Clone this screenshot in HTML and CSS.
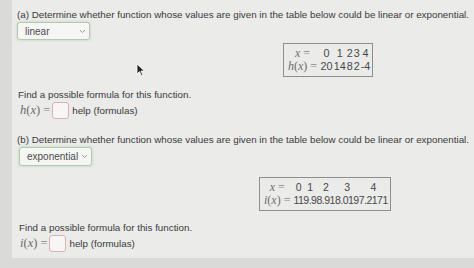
FILE: index.html
```html
<!DOCTYPE html>
<html>
<head>
<meta charset="utf-8">
<link rel="stylesheet" href="styles.css">
</head>
<body>
<div class="panel">
  <section class="part part-a">
    <p class="question">(a) Determine whether function whose values are given in the table below could be linear or exponential.</p>
    <div class="select sel-a"><span>linear</span><svg class="chev" width="7" height="5" viewBox="0 0 7 5"><path d="M1 1 L3.5 3.5 L6 1" fill="none" stroke="#9a9a9a" stroke-width="1"/></svg></div>
    <div class="table-row tr-a">
      <table class="vals">
        <tr><td class="lab"><i>x</i><span class="eq">=</span></td><td>0</td><td>1</td><td>2</td><td>3</td><td>4</td></tr>
        <tr><td class="lab"><i>h</i>(<i>x</i>)<span class="eq">=</span></td><td>20</td><td>14</td><td>8</td><td>2</td><td>-4</td></tr>
      </table>
    </div>
    <p class="find">Find a possible formula for this function.</p>
    <div class="answer"><span class="mlab"><i>h</i>(<i>x</i>)<span class="eq">=</span></span><span class="box"></span><span class="help">help (formulas)</span></div>
  </section>
  <section class="part part-b">
    <p class="question">(b) Determine whether function whose values are given in the table below could be linear or exponential.</p>
    <div class="select sel-b"><span>exponential</span><svg class="chev" width="7" height="5" viewBox="0 0 7 5"><path d="M1 1 L3.5 3.5 L6 1" fill="none" stroke="#9a9a9a" stroke-width="1"/></svg></div>
    <div class="table-row tr-b">
      <table class="vals">
        <tr><td class="lab"><i>x</i><span class="eq">=</span></td><td>0</td><td>1</td><td>2</td><td>3</td><td>4</td></tr>
        <tr><td class="lab"><i>i</i>(<i>x</i>)<span class="eq">=</span></td><td>11</td><td>9.9</td><td>8.91</td><td>8.019</td><td>7.2171</td></tr>
      </table>
    </div>
    <p class="find">Find a possible formula for this function.</p>
    <div class="answer"><span class="mlab"><i>i</i>(<i>x</i>)<span class="eq">=</span></span><span class="box"></span><span class="help">help (formulas)</span></div>
  </section>
  <svg class="cursor" width="10" height="14" viewBox="0 0 10 14"><path d="M1 1 L1 11 L3.5 8.6 L5.3 12.6 L6.8 11.9 L5 8 L8.4 8 Z" fill="#222" stroke="#fff" stroke-width="0.8"/></svg>
</div>
</body>
</html>
```
FILE: styles.css
```css
html, body {
  margin: 0;
  padding: 0;
}
body {
  width: 474px;
  height: 268px;
  background: #dadad8;
  font-family: "Liberation Sans", Arial, sans-serif;
  color: #3a3a3a;
  overflow: hidden;
}
.panel {
  position: relative;
  margin-left: 12px;
  height: 258px;
  background: #ebebea;
  padding: 9px 0 0 5px;
  box-sizing: border-box;
}
.question,
.find {
  margin: 0;
  font-size: 9.8px;
  line-height: 12px;
  white-space: nowrap;
}
.select {
  display: flex;
  align-items: center;
  justify-content: space-between;
  height: 18px;
  box-sizing: border-box;
  border: 1px solid #b6c8b3;
  border-radius: 3px;
  background: #f6f6f5;
  box-shadow: 0 0 2px 1px #d0e1cc;
  font-size: 10px;
  color: #4a4a4a;
  padding: 0 3px 0 7px;
}
.sel-a {
  width: 73px;
  margin-top: 1px;
}
.sel-b {
  width: 73px;
  height: 19px;
  margin-top: 1px;
  margin-left: 2px;
}
.table-row {
  display: flex;
}
.tr-a {
  margin-top: 3px;
  padding-left: 266px;
}
.tr-b {
  margin-top: 11px;
  padding-left: 242px;
}
.vals {
  border: 1px solid #8e8e8e;
  border-collapse: separate;
  border-spacing: 0;
  padding: 3px 1px 3px 2px;
  font-size: 10.8px;
  color: #474747;
}
.tr-b .vals {
  font-size: 10.5px;
  letter-spacing: -0.5px;
  padding-right: 2px;
}
.vals td {
  text-align: center;
  padding: 0;
  height: 13px;
  line-height: 13px;
}
.tr-a .vals td {
  padding: 0 0.5px;
}
.vals td.lab,
.tr-a .vals td.lab {
  padding: 0 1px 0 2px;
  font-family: "Liberation Serif", serif;
  font-size: 12px;
  letter-spacing: 0;
  color: #6c6c6c;
}
.eq {
  color: #8a8a8a;
  font-style: normal;
  margin: 0 2px 0 3px;
}
.part-a .find {
  margin-top: 12px;
  margin-left: 1px;
}
.part-b .find {
  margin-top: 11px;
  margin-left: 2px;
}
.answer {
  display: flex;
  align-items: center;
  height: 18px;
  margin-left: 3px;
}
.mlab {
  font-family: "Liberation Serif", serif;
  font-size: 12.5px;
  color: #6a6a6a;
}
.box {
  width: 17px;
  height: 17px;
  box-sizing: border-box;
  border: 1px solid #d9b3b3;
  border-radius: 3px;
  background: #f7f5f5;
}
.help {
  font-size: 9.8px;
  margin-left: 3px;
}
.part-b {
  margin-top: 15px;
}
.cursor {
  position: absolute;
  left: 124px;
  top: 63px;
}
```
